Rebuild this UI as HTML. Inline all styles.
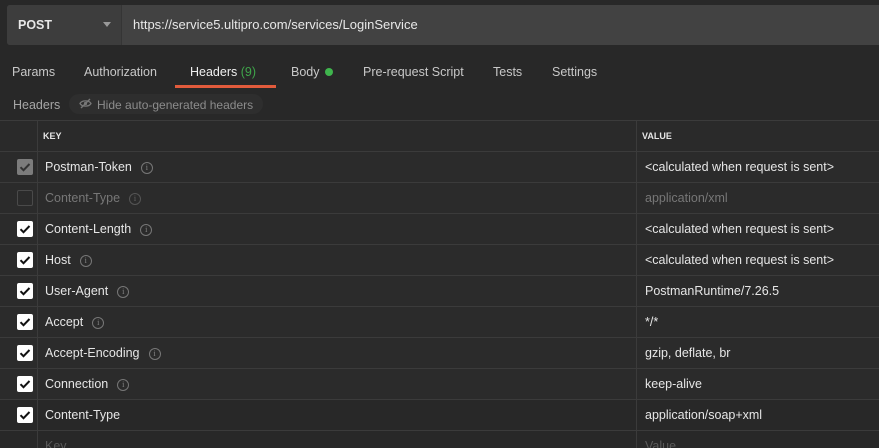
<!DOCTYPE html>
<html><head><meta charset="utf-8"><style>
*{margin:0;padding:0;box-sizing:border-box}
html,body{width:879px;height:448px;overflow:hidden}
body{background:#282828;font-family:"Liberation Sans",sans-serif;color:#e6e6e6;font-size:12.5px;position:relative}
.abs{position:absolute}
.bar{left:7px;top:5px;width:872px;height:40px;background:#424242;border-radius:3px 0 0 3px}
.method{left:7px;top:5px;width:115px;height:40px;background:#3d3d3d;border-right:1px solid #353535;border-radius:3px 0 0 3px}
.tab{top:65px;font-size:12.5px;color:#c8c8c8}
.row{left:0;width:879px;height:31px;border-top:1px solid #3b3b3b;background:#2b2b2b}
.vl{top:120px;width:1px;height:328px;background:#3b3b3b}
.cb{left:17px;width:16px;height:16px;background:#fff;border-radius:2px}
.k{left:45px;font-size:12.5px}
.v{left:645px;font-size:12.5px}
.i{position:relative;top:0px;display:inline-block;width:12px;height:12px;border:1px solid #777;border-radius:50%;font-size:8px;line-height:10px;text-align:center;color:#888;margin-left:9px;vertical-align:middle;font-family:"Liberation Serif",serif}
</style></head><body>
<div class="abs bar"></div>
<div class="abs method"></div>
<div class="abs" style="left:18px;top:18px;font-weight:bold;font-size:12.5px;color:#e8e8e8">POST</div>
<div class="abs" style="left:103px;top:22px;width:0;height:0;border-left:4px solid transparent;border-right:4px solid transparent;border-top:5px solid #999"></div>
<div class="abs" style="left:133px;top:17px;font-size:13px;color:#e8e8e8">https://service5.ultipro.com/services/LoginService</div>

<div class="abs tab" style="left:12px">Params</div>
<div class="abs tab" style="left:84px">Authorization</div>
<div class="abs tab" style="left:190px;color:#f0f0f0">Headers <span style="color:#3fa54a">(9)</span></div>
<div class="abs" style="left:175px;top:85px;width:101px;height:3px;background:#e25b3c"></div>
<div class="abs tab" style="left:291px">Body <span style="display:inline-block;width:8px;height:8px;border-radius:50%;background:#3fb54d;margin-left:2px"></span></div>
<div class="abs tab" style="left:363px">Pre-request Script</div>
<div class="abs tab" style="left:493px">Tests</div>
<div class="abs tab" style="left:552px">Settings</div>

<div class="abs" style="left:13px;top:98px;color:#a6a6a6;font-size:12.5px">Headers</div>
<div class="abs" style="left:69px;top:94px;width:194px;height:20px;border-radius:10px;background:#2e2e2e"></div>
<svg class="abs" style="left:79px;top:98px" width="13" height="11" viewBox="0 0 13 11"><path d="M1 5.5C3 2 10 2 12 5.5C10 9 3 9 1 5.5Z" fill="none" stroke="#777" stroke-width="1.3"/><circle cx="6.5" cy="5.5" r="1.6" fill="#777"/><path d="M2 10L11 1" stroke="#777" stroke-width="1.3"/></svg>
<div class="abs" style="left:97px;top:98px;color:#8c8c8c;font-size:12px">Hide auto-generated headers</div>

<div class="abs row" style="top:120px;background:#2a2a2a"></div>
<div class="abs" style="left:43px;top:131px;font-size:9px;font-weight:bold;color:#e6e6e6">KEY</div>
<div class="abs" style="left:642px;top:131px;font-size:9px;font-weight:bold;color:#e6e6e6">VALUE</div>

<div class="abs row" style="top:151px"></div>
<div class="abs row" style="top:182px"></div>
<div class="abs row" style="top:213px"></div>
<div class="abs row" style="top:244px"></div>
<div class="abs row" style="top:275px"></div>
<div class="abs row" style="top:306px"></div>
<div class="abs row" style="top:337px"></div>
<div class="abs row" style="top:368px"></div>
<div class="abs row" style="top:399px;background:#282828"></div>
<div class="abs row" style="top:430px;background:#282828"></div>
<div class="abs vl" style="left:37px"></div>
<div class="abs vl" style="left:636px"></div>

<svg width="0" height="0" style="position:absolute"><defs><path id="ck" d="M3.5 8.2L6.5 11.2L12.5 5" fill="none" stroke-width="2"/></defs></svg>

<div class="abs cb" style="top:159px;background:#7c7c7c"><svg width="16" height="16"><use href="#ck" stroke="#333"/></svg></div>
<div class="abs k" style="top:160px">Postman-Token<span class="i">i</span></div>
<div class="abs v" style="top:160px">&lt;calculated when request is sent&gt;</div>

<div class="abs cb" style="top:190px;background:transparent;border:1px solid #4a4a4a"></div>
<div class="abs k" style="top:191px;color:#777">Content-Type<span class="i" style="border-color:#555;color:#666">i</span></div>
<div class="abs v" style="top:191px;color:#777">application/xml</div>

<div class="abs cb" style="top:221px"><svg width="16" height="16"><use href="#ck" stroke="#111"/></svg></div>
<div class="abs k" style="top:222px">Content-Length<span class="i">i</span></div>
<div class="abs v" style="top:222px">&lt;calculated when request is sent&gt;</div>

<div class="abs cb" style="top:252px"><svg width="16" height="16"><use href="#ck" stroke="#111"/></svg></div>
<div class="abs k" style="top:253px">Host<span class="i">i</span></div>
<div class="abs v" style="top:253px">&lt;calculated when request is sent&gt;</div>

<div class="abs cb" style="top:283px"><svg width="16" height="16"><use href="#ck" stroke="#111"/></svg></div>
<div class="abs k" style="top:284px">User-Agent<span class="i">i</span></div>
<div class="abs v" style="top:284px">PostmanRuntime/7.26.5</div>

<div class="abs cb" style="top:314px"><svg width="16" height="16"><use href="#ck" stroke="#111"/></svg></div>
<div class="abs k" style="top:315px">Accept<span class="i">i</span></div>
<div class="abs v" style="top:315px">*/*</div>

<div class="abs cb" style="top:345px"><svg width="16" height="16"><use href="#ck" stroke="#111"/></svg></div>
<div class="abs k" style="top:346px">Accept-Encoding<span class="i">i</span></div>
<div class="abs v" style="top:346px">gzip, deflate, br</div>

<div class="abs cb" style="top:376px"><svg width="16" height="16"><use href="#ck" stroke="#111"/></svg></div>
<div class="abs k" style="top:377px">Connection<span class="i">i</span></div>
<div class="abs v" style="top:377px">keep-alive</div>

<div class="abs cb" style="top:407px"><svg width="16" height="16"><use href="#ck" stroke="#111"/></svg></div>
<div class="abs k" style="top:408px">Content-Type</div>
<div class="abs v" style="top:408px">application/soap+xml</div>

<div class="abs k" style="top:439px;color:#5a5a5a">Key</div>
<div class="abs v" style="top:439px;color:#5a5a5a">Value</div>
</body></html>
